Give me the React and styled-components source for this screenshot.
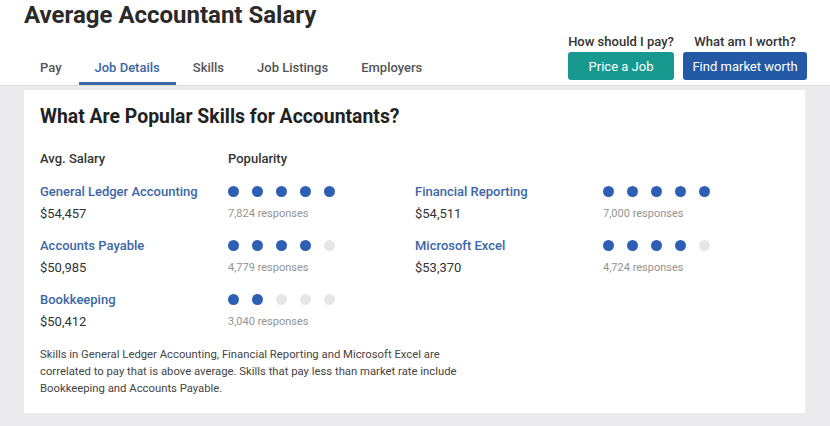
import React from 'react'
import styled, { createGlobalStyle } from 'styled-components'

const Global = createGlobalStyle`
  html, body {
    margin: 0;
    padding: 0;
    background: #ebebed;
    font-family: Roboto, 'Noto Sans', Arial, sans-serif;
  }
`

const Header = styled.header`
  background: #fff;
  height: 86px;
  border-bottom: 1px solid #dcdcdc;
  padding: 0 23px 0 24px;
  display: flex;
  justify-content: space-between;
  box-sizing: border-box;
`

const Left = styled.div`
  display: flex;
  flex-direction: column;
  justify-content: space-between;
`

const Title = styled.h1`
  margin: 0;
  padding-top: 1px;
  font-size: 24px;
  font-weight: 700;
  color: #2a2a2a;
  line-height: 28px;
`

const Tabs = styled.nav`
  display: flex;
`

const Tab = styled.a`
  font-size: 13px;
  font-weight: 500;
  color: ${({ active }) => (active ? '#3b67a6' : '#555')};
  padding: 0 16px 5px;
  margin-right: 1px;
  border-bottom: 3px solid ${({ active }) => (active ? '#3b67a6' : 'transparent')};
  line-height: 18px;
`

const Actions = styled.div`
  display: flex;
  gap: 9px;
  align-self: flex-end;
  padding-bottom: 5px;
`

const Action = styled.div`
  display: flex;
  flex-direction: column;
  align-items: center;
  gap: 2px;
`

const Ask = styled.span`
  font-size: 13px;
  font-weight: 500;
  color: #333;
  line-height: 16px;
`

const Button = styled.button`
  border: none;
  border-radius: 3px;
  height: 28px;
  padding: 0;
  width: ${({ w }) => w}px;
  background: ${({ bg }) => bg};
  color: #fff;
  font-family: inherit;
  font-size: 13px;
  font-weight: 400;
`

const Main = styled.main`
  padding: 4px 25px 12px 24px;
`

const Card = styled.section`
  background: #fff;
  padding: 15px 16px 16px;
`

const Heading = styled.h2`
  margin: 0 0 22px;
  font-size: 19.4px;
  font-weight: 700;
  color: #222;
  line-height: 24px;
`

const Grid = styled.div`
  display: grid;
  grid-template-columns: 188px 187px 188px 1fr;
  row-gap: 15px;
`

const ColHead = styled.div`
  font-size: 13px;
  font-weight: 500;
  color: #333;
  line-height: 16px;
  margin-bottom: 1px;
`

const Cell = styled.div`
  display: flex;
  flex-direction: column;
  gap: 5px;
`

const Name = styled.a`
  font-size: 13px;
  font-weight: 500;
  color: #3b67a6;
  line-height: 17px;
`

const Salary = styled.span`
  font-size: 13px;
  color: #333;
  line-height: 17px;
`

const Dots = styled.div`
  display: flex;
  gap: 13px;
  height: 17px;
  align-items: center;
`

const Dot = styled.span`
  width: 11px;
  height: 11px;
  border-radius: 50%;
  background: ${({ on }) => (on ? '#2d5fb4' : '#e6e6e8')};
`

const Responses = styled.span`
  font-size: 11px;
  color: #939393;
  line-height: 17px;
`

const Note = styled.p`
  margin: 16px 0 0;
  font-size: 11.3px;
  line-height: 17px;
  color: #444;
  max-width: 440px;
`

const skills = [
  [
    { name: 'General Ledger Accounting', salary: '$54,457', dots: 5, resp: '7,824' },
    { name: 'Financial Reporting', salary: '$54,511', dots: 5, resp: '7,000' }
  ],
  [
    { name: 'Accounts Payable', salary: '$50,985', dots: 4, resp: '4,779' },
    { name: 'Microsoft Excel', salary: '$53,370', dots: 4, resp: '4,724' }
  ],
  [{ name: 'Bookkeeping', salary: '$50,412', dots: 2, resp: '3,040' }]
]

const Skill = ({ s }) => (
  <>
    <Cell>
      <Name>{s.name}</Name>
      <Salary>{s.salary}</Salary>
    </Cell>
    <Cell>
      <Dots>
        {[0, 1, 2, 3, 4].map(i => <Dot key={i} on={i < s.dots ? 1 : 0} />)}
      </Dots>
      <Responses>{s.resp} responses</Responses>
    </Cell>
  </>
)

const App = () => (
  <>
    <Global />
    <Header>
      <Left>
        <Title>Average Accountant Salary</Title>
        <Tabs>
          <Tab>Pay</Tab>
          <Tab active>Job Details</Tab>
          <Tab>Skills</Tab>
          <Tab>Job Listings</Tab>
          <Tab>Employers</Tab>
        </Tabs>
      </Left>
      <Actions>
        <Action>
          <Ask>How should I pay?</Ask>
          <Button w={106} bg="#17998f">Price a Job</Button>
        </Action>
        <Action>
          <Ask>What am I worth?</Ask>
          <Button w={124} bg="#2459a6">Find market worth</Button>
        </Action>
      </Actions>
    </Header>
    <Main>
      <Card>
        <Heading>What Are Popular Skills for Accountants?</Heading>
        <Grid>
          <ColHead>Avg. Salary</ColHead>
          <ColHead>Popularity</ColHead>
          <div />
          <div />
          {skills.map((row, i) => (
            <React.Fragment key={i}>
              {row.map(s => <Skill key={s.name} s={s} />)}
              {row.length === 1 && <><div /><div /></>}
            </React.Fragment>
          ))}
        </Grid>
        <Note>
          Skills in General Ledger Accounting, Financial Reporting and Microsoft Excel are
          correlated to pay that is above average. Skills that pay less than market rate include
          Bookkeeping and Accounts Payable.
        </Note>
      </Card>
    </Main>
  </>
)

export default App
